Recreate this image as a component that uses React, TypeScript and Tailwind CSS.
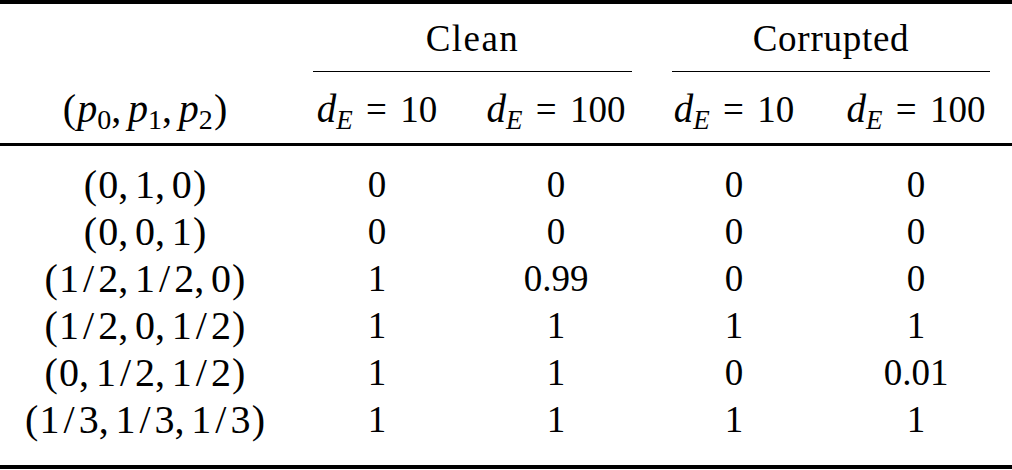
import { FC, ReactNode } from 'react';

type Row = {
  tuple: string[];
  values: string[];
};

const rows: Row[] = [
  { tuple: ['0', '1', '0'], values: ['0', '0', '0', '0'] },
  { tuple: ['0', '0', '1'], values: ['0', '0', '0', '0'] },
  { tuple: ['1/2', '1/2', '0'], values: ['1', '0.99', '0', '0'] },
  { tuple: ['1/2', '0', '1/2'], values: ['1', '1', '1', '1'] },
  { tuple: ['0', '1/2', '1/2'], values: ['1', '1', '0', '0.01'] },
  { tuple: ['1/3', '1/3', '1/3'], values: ['1', '1', '1', '1'] },
];

const grid = 'grid grid-cols-[290px_174px_184px_172px_192px]';

// one entry of the tuple, slash a bit wider like the math font
const Entry: FC<{ value: string }> = ({ value }) => {
  const [num, den] = value.split('/');
  if (!den) return <span>{num}</span>;
  return (
    <span>
      {num}
      <span className="mx-[0.1em]">/</span>
      {den}
    </span>
  );
};

const Tuple: FC<{ items: ReactNode[] }> = ({ items }) => (
  <span className="font-['Liberation_Serif'] text-[40px] leading-none whitespace-nowrap">
    <span className="mr-[0.03em]">(</span>
    {items.map((item, i) => (
      <span key={i}>
        {item}
        {i < items.length - 1 && <span className="mr-[0.17em]">,</span>}
      </span>
    ))}
    <span className="ml-[0.03em]">)</span>
  </span>
);

const DimHeader: FC<{ value: string }> = ({ value }) => (
  <span className="font-['Liberation_Serif'] text-[37px] leading-none whitespace-nowrap">
    <span className="text-[39px] italic">d</span>
    <sub className="text-[27px] italic">E</sub>
    <span className="mx-[0.36em]">=</span>
    {value}
  </span>
);

const P: FC<{ i: number }> = ({ i }) => (
  <span>
    <span className="italic">p</span>
    <sub className="text-[28px]">{i}</sub>
  </span>
);

export default function App() {
  return (
    <div className="w-[1012px] h-[470px] bg-white text-black font-['Liberation_Serif']">
      <div className="h-[4px] bg-black" />

      <div className={`${grid} h-[68px] text-[37px] leading-none`}>
        <div />
        <div className="col-span-2 ml-[23px] mr-[16px] flex items-end justify-center pb-[14px] border-b-[1.5px] border-black">
          <span className="font-['Liberation_Serif'] tracking-[0.04em]">Clean</span>
        </div>
        <div className="col-span-2 ml-[24px] mr-[22px] flex items-end justify-center pb-[14px] border-b-[1.5px] border-black">
          <span className="font-['Liberation_Serif'] tracking-[0.02em]">Corrupted</span>
        </div>
      </div>

      <div className={`${grid} h-[71px]`}>
        <div className="flex items-end justify-center pb-[14px]">
          <Tuple items={[<P i={0} />, <P i={1} />, <P i={2} />]} />
        </div>
        {['10', '100', '10', '100'].map((v, i) => (
          <div key={i} className="flex items-end justify-center pb-[15px]">
            <DimHeader value={v} />
          </div>
        ))}
      </div>

      <div className="h-[3px] bg-black" />

      <div className="pt-[15px] pb-[22px]">
        {rows.map((row, r) => (
          <div key={r} className={`${grid} h-[47px]`}>
            <div className="flex items-center justify-center">
              <Tuple items={row.tuple.map((t) => <Entry value={t} />)} />
            </div>
            {row.values.map((v, i) => (
              <div key={i} className="flex items-center justify-center">
                <span className="font-['Liberation_Serif'] text-[37px] leading-none">{v}</span>
              </div>
            ))}
          </div>
        ))}
      </div>

      <div className="h-[4px] bg-black" />
    </div>
  );
}
